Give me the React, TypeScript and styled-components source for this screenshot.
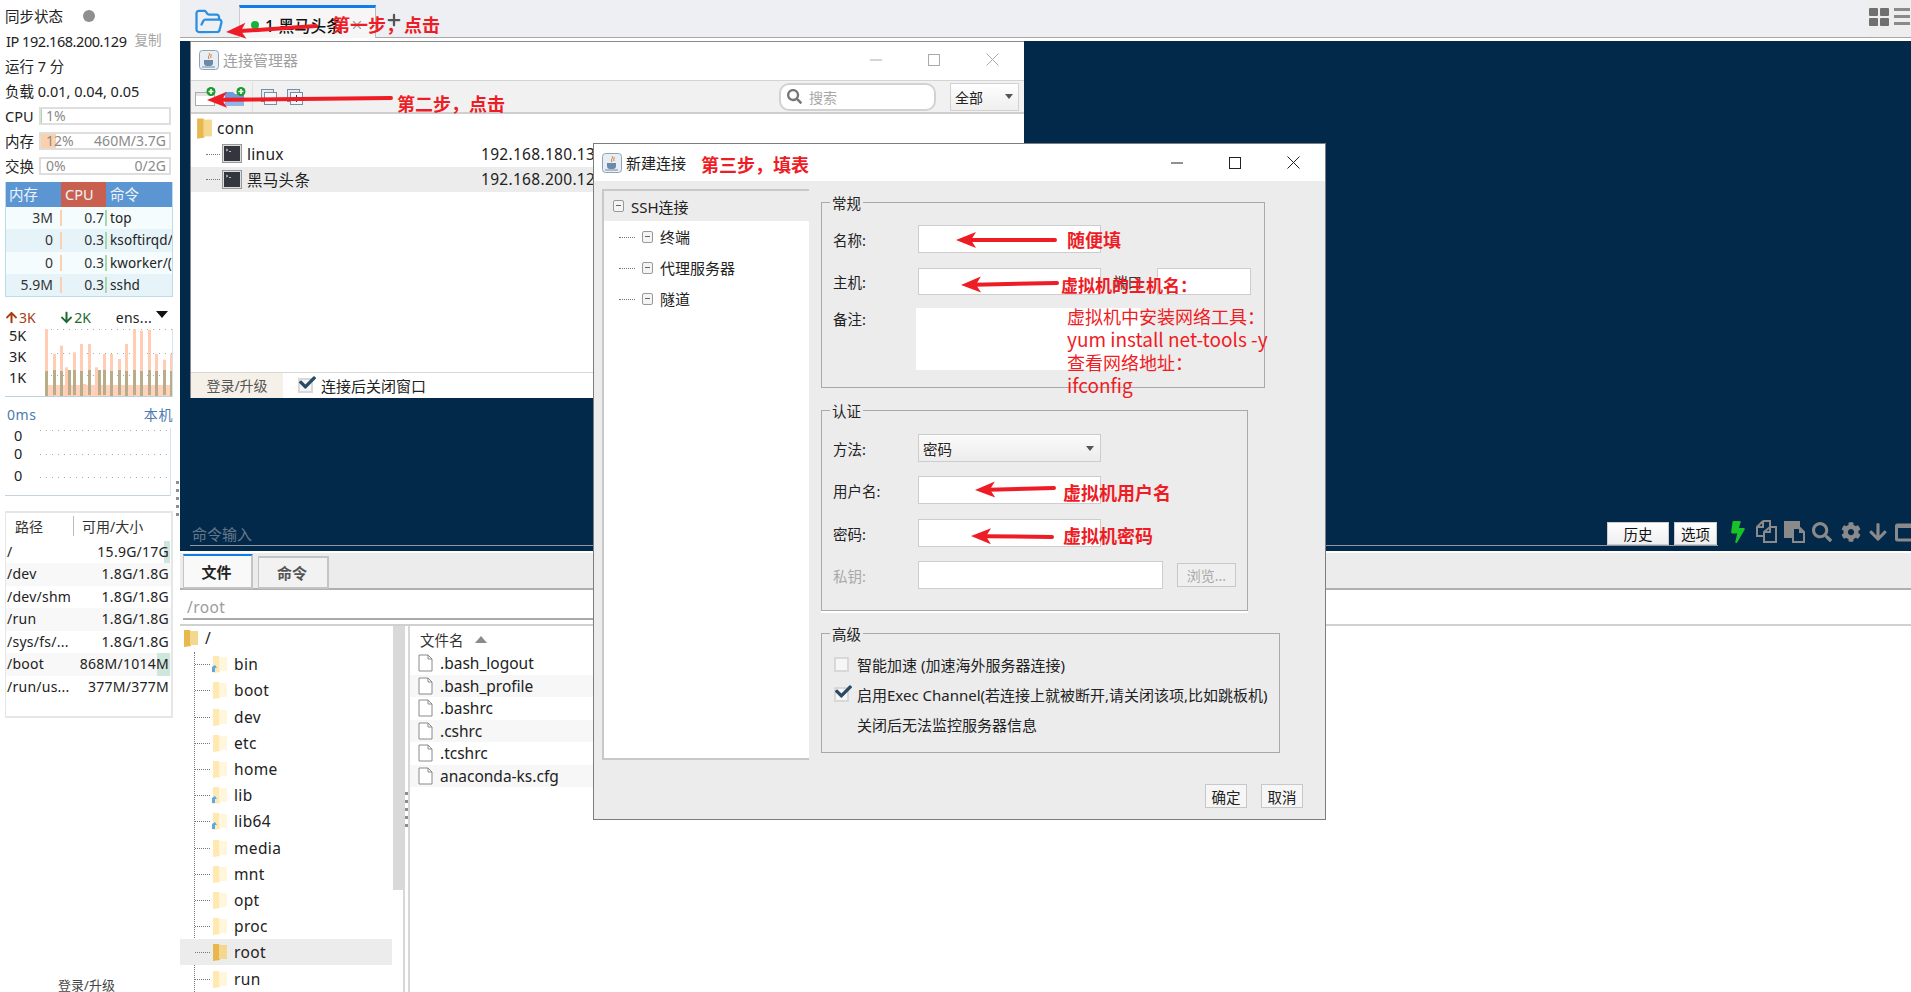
import React from "react";
import styled, { createGlobalStyle } from "styled-components";
import { FaCog, FaSearch, FaArrowDown, FaArrowUp, FaBolt, FaCheck } from "react-icons/fa";
import { FolderOpen, Plus, X } from "lucide-react";

const Global = createGlobalStyle`
  html, body { margin: 0; padding: 0; background: #fff; }
  * { box-sizing: border-box; }
  body { font-family: "Noto Sans", "Noto Sans CJK SC", sans-serif; font-size: 14.5px; color: #222; }
`;

const Page = styled.div`
  position: relative; width: 1911px; height: 992px; overflow: hidden; display: flex; background: #fff;
`;

/* ---------- sidebar ---------- */
const Sidebar = styled.aside`
  width: 180px; flex: none; height: 100%; display: flex; flex-direction: column; padding: 3.5px 7px 0 5px; position: relative; white-space: nowrap;
`;
const InfoRow = styled.div`
  height: 25px; display: flex; align-items: center; gap: 6px; line-height: 1;
`;
const IpText = styled.span`
  letter-spacing: -.45px; margin-left: 1px;
`;
const SyncDot = styled.span`
  width: 12px; height: 12px; border-radius: 50%; background: #8f8f8f; margin-left: 14px;
`;
const MutedLink = styled.span`
  color: #a5a5a5; font-size: 13.5px; margin-left: 2px;
`;
const BarLabel = styled.span`
  width: 28px; flex: none;
`;
const BarTrack = styled.div`
  position: relative; flex: none; width: 132px; height: 18px; border: 2px solid #dedede; background: #fff; display: flex; justify-content: space-between; align-items: center; padding: 0 3px 0 5px; color: #8a8a8a; font-size: 14px; overflow: hidden;
  span { position: relative; }
`;
const BarFill = styled.i<{ $color: string }>`
  position: absolute; left: 0; top: 0; bottom: 0; background: ${p => p.$color};
`;
const ProcTable = styled.div`
  margin-top: 3.5px; width: 168px; border: 1px solid #bcdcec; border-top: 0; font-size: 14px; overflow: hidden;
`;
const ProcGrid = styled.div<{ $bg: string }>`
  display: grid; grid-template-columns: 56px 45px 1fr; height: 22.3px; align-items: stretch; line-height: 22px; background: ${p => p.$bg};
`;
const ProcHead = styled.div<{ $hot?: boolean }>`
  height: 25px; line-height: 25px; color: #eef4fa; background: ${p => (p.$hot ? "#c9604f" : "#5b96d2")}; padding-left: 4px; font-size: 14.5px;
`;
const ProcHeadRow = styled.div`
  display: grid; grid-template-columns: 56px 45px 1fr; margin: 0 -1px;
`;
const NumCell = styled.div<{ $mark: string; $pad: number }>`
  text-align: right; padding-right: ${p => p.$pad}px; position: relative; color: #333;
  &::after { content: ""; position: absolute; right: 0; top: 3px; bottom: 3px; width: 2px; background: ${p => p.$mark}; }
`;
const CmdCell = styled.div`
  padding-left: 3px; overflow: hidden; font-size: 13.5px; letter-spacing: .1px;
`;
const MeterHead = styled.div<{ $top: number }>`
  margin-top: ${p => p.$top}px; height: 20px; display: flex; align-items: center; font-size: 14px; width: 168px;
`;
const NetValue = styled.span<{ $color: string }>`
  display: inline-flex; align-items: center; color: ${p => p.$color}; gap: 1px; width: 56px; font-size: 14px;
  svg { font-size: 13px; }
`;
const Iface = styled.span`
  margin-left: auto; letter-spacing: .3px; margin-right: 2px;
`;
const DownCaret = styled.i`
  width: 0; height: 0; border-left: 6px solid transparent; border-right: 6px solid transparent; border-top: 7px solid #111; margin: 0 5px 5px 2px;
`;
const ChartSvg = styled.svg<{ $mt: number }>`
  display: block; margin-top: ${p => p.$mt}px; flex: none;
`;
const PingLabel = styled.span`
  color: #4a7bb0; letter-spacing: .6px; padding-left: 2px;
  &:last-child { margin-left: auto; padding-left: 0; }
`;
const DiskTable = styled.div`
  margin-top: 14.5px; width: 168px; height: 207px; border: 2px solid #e6e6e6; border-left-width: 1px; flex: none; font-size: 14px;
`;
const DiskHead = styled.div`
  display: grid; grid-template-columns: 68px 1fr; height: 27px; align-items: center; margin-bottom: 1px; color: #333;
  span:first-child { padding-left: 9px; border-right: 1px solid #bbb; }
  span:last-child { padding-left: 8px; }
`;
const DiskRow = styled.div<{ $alt: boolean }>`
  position: relative; height: 22.5px; line-height: 22px; display: flex; justify-content: space-between; padding: 0 2px 0 1px; background: ${p => (p.$alt ? "#f8f8f8" : "#fff")}; letter-spacing: .25px;
  span { position: relative; }
`;
const DiskUsed = styled.i`
  position: absolute; right: 1px; top: 0; bottom: 0; background: #cfe6dc;
`;
const SideFooter = styled.div`
  margin-top: auto; height: 24px; text-align: center; font-size: 13px; color: #444; padding: 1px 5px 0 0; margin-bottom: -6px;
`;
const DragDots = styled.div<{ $x: number; $y: number }>`
  position: absolute; left: ${p => p.$x}px; top: ${p => p.$y}px; width: 3px; height: 38px;
  background: repeating-linear-gradient(to bottom, #8d8d8d 0 3px, transparent 3px 8px);
`;

/* ---------- main column ---------- */
const Main = styled.main`
  flex: 1; min-width: 0; display: flex; flex-direction: column; height: 100%;
`;
const TabBar = styled.div`
  height: 38px; flex: none; background: #edeff3; border-bottom: 1px solid #a8a8a8; display: flex; align-items: flex-end; padding-left: 14px; position: relative;
`;
const OpenFolder = styled.span`
  width: 45px; height: 34px; color: #2b8fe0; flex: none; display: flex; align-items: flex-start; svg { margin-top: 4px; }
`;
const TermTab = styled.div`
  width: 137px; height: 33px; margin-bottom: -1px; background: #f6f6f6; border-top: 3px solid #0f7ee8; border-left: 1px solid #ccc; border-right: 1px solid #bbb; display: flex; align-items: center; padding: 3px 0 0 11px; gap: 6px; font-size: 16px; font-weight: 500; white-space: nowrap; color: #111; flex: none;
`;
const LiveDot = styled.i`
  width: 8px; height: 8px; border-radius: 50%; background: #19b33c; flex: none;
`;
const TabClose = styled.span`
  color: #9a9a9a; margin-left: 2px; display: flex;
`;
const AddTab = styled.span`
  color: #555; margin: 0 0 8px 9px; display: flex;
`;
const ViewIcons = styled.div`
  margin-left: auto; height: 37px; width: 43px; background: #eeeeee; display: flex; align-items: center; gap: 5px; padding: 0 0 4px 1px;
`;
const GridIcon = styled.i`
  display: grid; grid-template-columns: 9px 9px; grid-auto-rows: 8px; gap: 2px; width: 20px; flex: none;
  b { background: #707070; border-radius: 1px; }
`;
const ListIcon = styled.i`
  width: 16px; height: 18px; flex: none;
  background: repeating-linear-gradient(to bottom, #8a8a8a 0 3px, #eeeeee 3px 7px);
`;
const WhiteGap = styled.div<{ $h: number }>`
  height: ${p => p.$h}px; flex: none; background: #fff;
`;
const Terminal = styled.div`
  height: 510px; flex: none; background: #03294a; display: flex; align-items: flex-end; padding: 0 0 5px 10px;
`;
const CmdInput = styled.div`
  width: 1528px; height: 25px; border-bottom: 1px solid #8d98a3; display: flex; align-items: flex-end; color: #64798a; font-size: 15px; line-height: 22px; padding-left: 2px; flex: none;
`;
const CmdButtons = styled.div`
  display: flex; gap: 5px; margin: 0 0 1px -111px; flex: none;
`;
const CmdButton = styled.button<{ $w: number }>`
  width: ${p => p.$w}px; height: 23px; border: 1px solid #ccc; background: linear-gradient(#fff, #efefef); font: inherit; font-size: 14.5px; color: #111; padding: 0; line-height: 20px;
`;
const CmdTools = styled.div`
  display: flex; align-items: center; gap: 7px; margin: 0 0 2px 10px; color: #8a8a8a; font-size: 20px; height: 25px; white-space: nowrap;
`;
const Bolt = styled.span`
  color: #18c02a; display: flex; font-size: 22px;
`;
const GearWrap = styled.span`
  display: flex; margin-left: 2px;
`;
const BottomTabs = styled.div`
  height: 37px; flex: none; background: #ececec; border-bottom: 2px solid #b0b0b0; display: flex; align-items: flex-end; padding-left: 3px; gap: 5px;
`;
const BottomTab = styled.div<{ $active?: boolean }>`
  width: ${p => (p.$active ? 70 : 71)}px; height: ${p => (p.$active ? 35 : 33)}px; margin-bottom: -1px; text-align: center; font-weight: 700; font-size: 15px; line-height: ${p => (p.$active ? 33 : 31)}px; padding-right: 2px;
  background: ${p => (p.$active ? "#f9f9f9" : "#f2f2f2")}; color: ${p => (p.$active ? "#222" : "#555")};
  border: 2px solid #c4c4c4; border-top: 2px solid ${p => (p.$active ? "#0f7ee8" : "#c4c4c4")}; border-left-width: 1px;
`;
const PathRow = styled.div`
  height: 30px; flex: none; width: 1140px; margin-left: 3px; border-bottom: 2px solid #a9a9a9; color: #9b9b9b; font-size: 15.5px; line-height: 35px; padding-left: 4px; letter-spacing: .4px;
`;
const Panes = styled.div`
  flex: 1; min-height: 0; display: flex; margin-top: 4px; overflow: hidden; border-top: 2px solid #d0d0d0;
`;
const TreePane = styled.div`
  width: 225px; flex: none; display: flex; border-right: 2px solid #d8d8d8; position: relative;
`;
const TreeCol = styled.div`
  width: 212px; flex: none; font-size: 15.5px; position: relative; letter-spacing: .35px; margin-top: -1px;
  &::before { content: ""; position: absolute; left: 14px; top: 27px; bottom: 0; border-left: 1px dotted #777; }
`;
const TreeRow = styled.div<{ $root?: boolean; $sel?: boolean }>`
  height: 26.2px; display: flex; align-items: center; gap: 5px; position: relative; padding-left: ${p => (p.$root ? 2 : 31)}px; background: ${p => (p.$sel ? "#ececec" : "transparent")};
  ${p => !p.$root && `&::before { content: ""; position: absolute; left: 15px; width: 15px; top: 50%; border-top: 1px dotted #777; }`}
`;
const Scrollbar = styled.div`
  width: 10px; height: 264px; background: #d9d9d9; flex: none; margin-left: 1px;
`;
const Splitter = styled.div`
  width: 3px; flex: none; position: relative;
`;
const FilePane = styled.div`
  flex: 1; min-width: 0; border-left: 2px solid #d8d8d8; font-size: 15.5px;
`;
const FileHead = styled.div`
  height: 26px; display: flex; align-items: center; padding-left: 10px; gap: 11px; font-size: 14.5px; color: #333;
`;
const SortUp = styled.i`
  width: 0; height: 0; border-left: 6px solid transparent; border-right: 6px solid transparent; border-bottom: 7px solid #8a8a8a;
`;
const FileRow = styled.div<{ $alt: boolean }>`
  height: 22.5px; width: 900px; display: flex; align-items: center; padding-left: 8px; gap: 7px; background: ${p => (p.$alt ? "#f7f7f7" : "#fff")};
`;

/* ---------- windows ---------- */
const ManagerWindow = styled.section`
  position: absolute; left: 190px; top: 41px; width: 834px; height: 357px; background: #fff; border-top: 1px solid #8a8a8a; border-left: 1px solid #8a8a8a; display: flex; flex-direction: column;
`;
const TitleBar = styled.div<{ $h: number; $muted?: boolean }>`
  height: ${p => p.$h}px; flex: none; background: #fff; display: flex; align-items: center; padding: 0 0 ${p => (p.$muted ? 3 : 0)}px 8px; gap: 4px; font-size: 15px; color: ${p => (p.$muted ? "#a0a0a0" : "#222")};
`;
const WinButtons = styled.div<{ $color: string; $right: number }>`
  margin-left: auto; display: flex; gap: 46px; margin-right: ${p => p.$right}px; color: ${p => p.$color}; align-items: center;
`;
const ManagerBar = styled.div`
  height: 34px; flex: none; background: #f1f1f1; border-top: 1px solid #d4d4d4; border-bottom: 2px solid #cfcfcf; display: flex; align-items: center; padding-left: 4px;
`;
const ToolGroup = styled.div<{ $sep?: boolean }>`
  display: flex; align-items: center; gap: ${p => (p.$sep ? 8 : 10)}px; padding-right: 5px; border-right: ${p => (p.$sep ? "1px solid #e0e0e0" : "0")}; height: 30px; margin-right: 8px;
`;
const SearchBox = styled.div`
  margin-left: auto; width: 157px; height: 28px; border: 2px solid #d2d2d2; border-radius: 10px; background: #fff; display: flex; align-items: center; padding-left: 6px; gap: 7px; color: #a8a8a8; font-size: 14px;
  svg { color: #777; font-size: 15px; }
`;
const AllSelect = styled.div`
  width: 69px; height: 28px; margin: 0 5px 0 14px; border: 1px solid #d2d2d2; background: linear-gradient(#fff, #eee); display: flex; align-items: center; justify-content: space-between; padding: 0 5px 0 4px; font-size: 14px;
`;
const SmallCaret = styled.i`
  width: 0; height: 0; border-left: 4px solid transparent; border-right: 4px solid transparent; border-top: 5px solid #555;
`;
const ConnTree = styled.div`
  flex: 1; padding-top: 1.5px; font-size: 15.5px; letter-spacing: .3px; position: relative;
  &::before { content: ""; position: absolute; left: 15px; top: 25px; height: 38px; border-left: 1px dotted #777; }
`;
const ConnRow = styled.div<{ $sel?: boolean; $root?: boolean }>`
  height: 25.5px; display: flex; align-items: center; position: relative; padding-left: ${p => (p.$root ? 4 : 31)}px; gap: ${p => (p.$root ? 3 : 5)}px; background: ${p => (p.$sel ? "#ececec" : "#fff")};
  ${p => !p.$root && `&::before { content: ""; position: absolute; left: 15px; width: 14px; top: 50%; border-top: 1px dotted #777; }`}
`;
const ConnName = styled.span`
  width: 229px; flex: none;
`;
const ManagerFooter = styled.div`
  height: 26px; flex: none; border-top: 1px solid #d8d8d8; display: flex; align-items: center; font-size: 15px; background: #fff;
`;
const UpgradeTag = styled.div`
  width: 92px; height: 100%; background: #f5f1e8; text-align: center; line-height: 25px; color: #555; font-size: 14px; margin-right: 15px;
`;
const FooterLabel = styled.span`
  margin-left: 8px;
`;
const Check = styled.span`
  width: 15px; height: 15px; flex: none; border: 2px solid #d8d8d8; background: #f6f6f6; position: relative; display: inline-block;
  svg { position: absolute; left: -1px; top: -6px; color: #2b4a66; font-size: 17px; }
`;

const Dialog = styled.section`
  position: absolute; left: 593px; top: 143px; width: 733px; height: 677px; background: #ececec; border: 1px solid #7d7d7d; display: flex; flex-direction: column;
`;
const DialogBody = styled.div`
  flex: 1; min-height: 0; display: flex;
`;
const NavTree = styled.nav`
  width: 207px; height: 571px; margin: 8px 0 0 8px; background: #fff; border: 2px solid #c8c8c8; border-right: 0; flex: none; font-size: 15px; position: relative;
  &::before { content: ""; position: absolute; left: 15px; top: 30px; height: 79px; border-left: 1px dotted #777; }
`;
const NavRow = styled.div<{ $sel?: boolean }>`
  height: ${p => (p.$sel ? 30 : 31)}px; display: flex; align-items: center; position: relative; gap: 7px; padding-left: ${p => (p.$sel ? 9 : 38)}px; background: ${p => (p.$sel ? "#ececec" : "#fff")};
  ${p => !p.$sel && `&::before { content: ""; position: absolute; left: 15px; width: 16px; top: 50%; border-top: 1px dotted #777; }`}
`;
const MinusBox = styled.i`
  width: 11px; height: 12px; flex: none; border: 1px solid #999; border-radius: 2px; background: #f4f4f4; position: relative;
  &::after { content: ""; position: absolute; left: 2px; right: 2px; top: 4px; height: 1px; background: #666; }
`;
const FormCol = styled.div`
  flex: 1; padding: 21px 0 0 12px; min-width: 0;
`;
const Group = styled.fieldset<{ $w: number; $h: number; $top: number; $pad: number; $halo?: boolean }>`
  margin: ${p => p.$top}px 0 0; width: ${p => p.$w}px; height: ${p => p.$h}px; border: 1px solid #a9a9a9; padding: ${p => p.$pad}px 0 0 10px; position: relative; min-inline-size: 0; font-size: 14.5px;
  ${p => (p.$halo ? "box-shadow: 0 2px 0 #fff;" : "")}
`;
const GroupTitle = styled.span`
  position: absolute; left: 8px; top: -10px; padding: 0 2px; background: #ececec; font-size: 14.5px; color: #222; line-height: 20px;
`;
const FieldRow = styled.div<{ $gap: number; $muted?: boolean; $top?: boolean }>`
  display: flex; align-items: ${p => (p.$top ? "flex-start" : "center")}; margin-bottom: ${p => p.$gap}px; color: ${p => (p.$muted ? "#a9a9a9" : "#222")};
`;
const FieldLabel = styled.label`
  width: 85px; flex: none; margin-left: 1px;
`;
const Field = styled.div<{ $w: number; $h: number }>`
  width: ${p => p.$w}px; height: ${p => p.$h}px; background: #fff; border: 1px solid #cdcdcd; flex: none;
`;
const NotesField = styled.div`
  width: 225px; height: 62px; background: #fff; margin-left: -2px; flex: none;
`;
const PortLabel = styled.label`
  width: 44px; margin-left: 12px; flex: none; color: #333;
`;
const ComboField = styled.div`
  width: 183px; height: 28px; background: linear-gradient(#fbfbfb, #ececec); border: 1px solid #cdcdcd; display: flex; align-items: center; justify-content: space-between; padding: 0 6px 0 4px; flex: none;
`;
const BrowseBtn = styled.button`
  width: 59px; height: 24px; margin-left: 14px; border: 1px solid #c8c8c8; background: #efefef; color: #a9a9a9; font: inherit; font-size: 14px; padding: 0;
`;
const CheckRow = styled.div`
  height: 30px; display: flex; align-items: center; gap: 8px; padding-left: 2px; white-space: nowrap; font-size: 15px;
`;
const CheckSpacer = styled.i`
  width: 15px; flex: none;
`;
const FormButtons = styled.div`
  display: flex; justify-content: flex-end; gap: 14px; margin: 31px 22px 0 0;
`;
const FormButton = styled.button`
  width: 42px; height: 24px; border: 1px solid #c8c8c8; background: #f6f6f6; font: inherit; font-size: 14.5px; padding: 0; color: #222;
`;

/* ---------- annotations ---------- */
const ArrowLayer = styled.svg`
  position: absolute; left: 0; top: 0; pointer-events: none;
`;
const Note = styled.div<{ $x: number; $y: number; $size?: number; $thin?: boolean }>`
  position: absolute; left: ${p => p.$x}px; top: ${p => p.$y}px; transform: translateY(-50%); color: ${p => (p.$thin ? "#f01c24" : "#ee1c25")}; font-weight: ${p => (p.$thin ? 400 : 700)}; font-size: ${p => p.$size ?? 18}px; line-height: 24px; white-space: nowrap; font-family: "Noto Sans CJK SC", sans-serif;
`;

/* ---------- drawings ---------- */
const WinGlyphs = () => (
  <>
    <svg width="12" height="12" viewBox="0 0 12 12"><path d="M0 6h12" stroke="currentColor" /></svg>
    <svg width="12" height="12" viewBox="0 0 12 12"><rect x=".5" y=".5" width="11" height="11" fill="none" stroke="currentColor" /></svg>
    <svg width="13" height="13" viewBox="0 0 13 13"><path d="M.5.5l12 12M12.5.5l-12 12" stroke="currentColor" /></svg>
  </>
);
const FolderIcon = ({ pale, link, big }: { pale?: boolean; link?: boolean; big?: boolean }) => (
  <svg width={big ? 19 : 18} height={big ? 24 : 20} viewBox="0 0 18 20" preserveAspectRatio="none" style={{ flex: "none" }}>
    <path d="M2 2h6l1 2v14l-7 1z" fill={pale ? "#ffe9b0" : "#e8b84e"} />
    <path d="M8 3h8v14H8z" fill={pale ? "#fff6dc" : "#f5d88f"} />
    {link && <path d="M1 18v-5l3-2 2 3h-2v4z" fill="#5aa9e6" />}
  </svg>
);
const TermIcon = () => (
  <svg width="20" height="19" viewBox="0 0 20 19" style={{ flex: "none" }}>
    <rect x=".5" y=".5" width="19" height="18" fill="#ddd" stroke="#999" />
    <rect x="2" y="2" width="16" height="15" fill="#33363c" />
    <path d="M4 5l2 1-2 1M7 7.5h2" stroke="#bbb" fill="none" />
  </svg>
);
const JavaIcon = () => (
  <svg width="20" height="20" viewBox="0 0 20 20" style={{ flex: "none" }}>
    <rect x=".5" y=".5" width="19" height="19" rx="3" fill="#e8eef4" stroke="#8da3b8" />
    <path d="M10 3c2 2-2 3 0 6M12 4c1 1-1 2 0 4" stroke="#d8742c" fill="none" />
    <path d="M5 10h9v3a3 3 0 0 1-3 3H8a3 3 0 0 1-3-3z" fill="#6c8aa8" />
    <path d="M3 17h13" stroke="#6c8aa8" />
  </svg>
);
const FileIcon = () => (
  <svg width="15" height="18" viewBox="0 0 15 18" style={{ flex: "none" }}>
    <path d="M1 1h9l4 4v12H1z" fill="#fff" stroke="#8a8a8a" />
    <path d="M10 1v4h4" fill="none" stroke="#8a8a8a" />
  </svg>
);
const NewConnIcon = () => (
  <svg width="22" height="20" viewBox="0 0 22 20">
    <rect x=".5" y="5.5" width="19" height="13" fill="#fff" stroke="#aaa" />
    <rect x="1" y="6" width="18" height="3" fill="#e4e4e4" />
    <circle cx="16" cy="4.5" r="4.5" fill="#1a9c2b" />
    <path d="M16 2v5M13.5 4.5h5" stroke="#fff" strokeWidth="1.6" />
  </svg>
);
const NewGroupIcon = () => (
  <svg width="22" height="20" viewBox="0 0 22 20">
    <path d="M0 5h8l2 2h9v12H0z" fill="#6f9bd8" />
    <rect y="11" width="19" height="8" fill="#8fb4e6" />
    <circle cx="16" cy="4.5" r="4.5" fill="#1a9c2b" />
    <path d="M16 2v5M13.5 4.5h5" stroke="#fff" strokeWidth="1.6" />
  </svg>
);
const WinCopyIcon = ({ split }: { split?: boolean }) => (
  <svg width="16" height="16" viewBox="0 0 16 16">
    <rect x=".5" y=".5" width="12" height="12" fill="#e4ebf3" stroke="#7a8ea3" />
    <rect x="3.5" y="3.5" width="12" height="12" fill="#f4f7fa" stroke="#7a8ea3" />
    {split && <path d="M9.5 6v7" stroke="#333" />}
  </svg>
);
const CopyDoc = () => (
  <svg width="21" height="23" viewBox="0 0 21 23" fill="none" stroke="#8a8a8a" strokeWidth="2" style={{ flex: "none" }}>
    <path d="M7 1h7v6M7 1L1 7v9h7M7 1v6H1" />
    <path d="M14 7h6v15H8V12zM14 7v5H8" />
  </svg>
);
const PasteDoc = () => (
  <svg width="21" height="23" viewBox="0 0 21 23" fill="none" stroke="#8a8a8a" strokeWidth="2" style={{ flex: "none" }}>
    <path d="M1 2h14v5H9v10H1z" fill="#8a8a8a" />
    <path d="M9 8h7l4 4v10H9z" />
    <path d="M16 8v4h4" />
  </svg>
);
const PanelIcon = () => (
  <svg width="20" height="20" viewBox="0 0 20 20" style={{ flex: "none" }}>
    <rect x="1.5" y="3" width="24" height="15" rx="1" fill="none" stroke="#8a8a8a" strokeWidth="3" />
    <rect x="2" y="3" width="24" height="3" fill="#8a8a8a" />
  </svg>
);

const tall = [[45, 115], [53, 190], [60, 165], [65, 230], [68, 240], [73, 185], [80, 160], [83, 280], [88, 160], [95, 230], [98, 240], [103, 190], [110, 190], [118, 205], [125, 160], [133, 115], [140, 120], [148, 118], [155, 190], [163, 207], [170, 190]];
const brown = [45, 53, 60, 68, 73, 80, 88, 98, 103, 110, 118, 125, 133, 140, 148, 155, 163, 170];

const NetChart = () => (
  <ChartSvg $mt={2} width="168" height="68" viewBox="0 0 168 68">
    {[0, 24, 46].map(y => <line key={y} x1="40" x2="167" y1={y + .5} y2={y + .5} stroke="#aaa" strokeDasharray="1 5" />)}
    <rect x="40" y="56" width="127" height="11" fill="#ffd2bd" />
    {tall.map(([x, z]) => <rect key={x} x={x - 5} y={(z - 115) / 3} width="3" height={67 - (z - 115) / 3} fill="#ffcdb4" />)}
    {brown.map(x => <rect key={x} x={x - 5} y={41 + (x % 5 === 3 ? 0 : 1)} width="3" height="25" fill="#b9ac88" />)}
    <line x1="0" x2="168" y1="67.5" y2="67.5" stroke="#bcd3de" />
    <line x1="167.5" x2="167.5" y1="0" y2="68" stroke="#d5e4ea" />
    {[["5K", 12], ["3K", 33], ["1K", 54]].map(([t, y]) => (
      <text key={String(t)} x="4" y={Number(y)} fontSize="14.5" fill="#222" fontFamily="Noto Sans">{t}</text>
    ))}
  </ChartSvg>
);
const PingChart = () => (
  <ChartSvg $mt={4} width="168" height="68" viewBox="0 0 168 68">
    {[2, 26, 49].map(y => <line key={y} x1="35" x2="162" y1={y + .5} y2={y + .5} stroke="#aaa" strokeDasharray="1 5" />)}
    <line x1="0" x2="165" y1="67.5" y2="67.5" stroke="#c4d4da" />
    <line x1="165.5" x2="165.5" y1="0" y2="68" stroke="#d5e4ea" />
    {[13, 31, 53].map(y => <text key={y} x="9" y={y} fontSize="14.5" fill="#222" fontFamily="Noto Sans">0</text>)}
  </ChartSvg>
);

const Arrow = ({ x1, y1, x2, y2, w = 4 }: { x1: number; y1: number; x2: number; y2: number; w?: number }) => {
  const a = Math.atan2(y1 - y2, x1 - x2);
  const p = (d: number, o: number) => `${x2 + Math.cos(a) * d - Math.sin(a) * o},${y2 + Math.sin(a) * d + Math.cos(a) * o}`;
  return (
    <g>
      <line x1={x1} y1={y1} x2={x2 + Math.cos(a) * 14} y2={y2 + Math.sin(a) * 14} stroke="#ee1c25" strokeWidth={w} strokeLinecap="round" />
      <polygon points={`${p(0, 0)} ${p(20, -8)} ${p(15, 0)} ${p(20, 8)}`} fill="#ee1c25" />
    </g>
  );
};

const procs = [["3M", "0.7", "top"], ["0", "0.3", "ksoftirqd/"], ["0", "0.3", "kworker/("], ["5.9M", "0.3", "sshd"]];
const disks: [string, string, number][] = [["/", "15.9G/17G", 6], ["/dev", "1.8G/1.8G", 0], ["/dev/shm", "1.8G/1.8G", 0], ["/run", "1.8G/1.8G", 0], ["/sys/fs/...", "1.8G/1.8G", 0], ["/boot", "868M/1014M", 13], ["/run/us...", "377M/377M", 0]];
const dirs: [string, boolean][] = [["bin", true], ["boot", false], ["dev", false], ["etc", false], ["home", false], ["lib", true], ["lib64", true], ["media", false], ["mnt", false], ["opt", false], ["proc", false], ["root", false], ["run", false]];
const files = [".bash_logout", ".bash_profile", ".bashrc", ".cshrc", ".tcshrc", "anaconda-ks.cfg"];

export default function App() {
  return (
    <Page>
      <Global />
      <Sidebar>
        <InfoRow>同步状态<SyncDot /></InfoRow>
        <InfoRow><IpText>IP 192.168.200.129</IpText><MutedLink>复制</MutedLink></InfoRow>
        <InfoRow>运行 7 分</InfoRow>
        <InfoRow>负载 0.01, 0.04, 0.05</InfoRow>
        <InfoRow>
          <BarLabel>CPU</BarLabel>
          <BarTrack><BarFill $color="#a7d8a7" style={{ width: "1%" }} /><span>1%</span></BarTrack>
        </InfoRow>
        <InfoRow>
          <BarLabel>内存</BarLabel>
          <BarTrack><BarFill $color="#fbd0ac" style={{ width: "12%" }} /><span>12%</span><span>460M/3.7G</span></BarTrack>
        </InfoRow>
        <InfoRow>
          <BarLabel>交换</BarLabel>
          <BarTrack><span>0%</span><span>0/2G</span></BarTrack>
        </InfoRow>
        <ProcTable>
          <ProcHeadRow>
            <ProcHead>内存</ProcHead>
            <ProcHead $hot>CPU</ProcHead>
            <ProcHead>命令</ProcHead>
          </ProcHeadRow>
          {procs.map((r, i) => (
            <ProcGrid key={i} $bg={i % 2 ? "#e6f4f9" : "#f5fcfd"}>
              <NumCell $mark="#fbd0ac" $pad={9}>{r[0]}</NumCell>
              <NumCell $mark="#a7d8a7" $pad={3}>{r[1]}</NumCell>
              <CmdCell>{r[2]}</CmdCell>
            </ProcGrid>
          ))}
        </ProcTable>
        <MeterHead $top={10}>
          <NetValue $color="#a83c10"><FaArrowUp />3K</NetValue>
          <NetValue $color="#1d6b2e"><FaArrowDown />2K</NetValue>
          <Iface>ens...</Iface>
          <DownCaret />
        </MeterHead>
        <NetChart />
        <MeterHead $top={7}>
          <PingLabel>0ms</PingLabel>
          <PingLabel>本机</PingLabel>
        </MeterHead>
        <PingChart />
        <DiskTable>
          <DiskHead><span>路径</span><span>可用/大小</span></DiskHead>
          {disks.map((d, i) => (
            <DiskRow key={d[0]} $alt={i % 2 === 1}>
              {d[2] > 0 && <DiskUsed style={{ width: d[2] }} />}
              <span>{d[0]}</span><span>{d[1]}</span>
            </DiskRow>
          ))}
        </DiskTable>
        <SideFooter>登录/升级</SideFooter>
        <DragDots $x={176} $y={481} />
      </Sidebar>

      <Main>
        <TabBar>
          <OpenFolder><FolderOpen size={30} strokeWidth={1.8} /></OpenFolder>
          <TermTab><LiveDot />1 黑马头条<TabClose><X size={14} /></TabClose></TermTab>
          <AddTab><Plus size={18} strokeWidth={3} /></AddTab>
          <ViewIcons>
            <GridIcon><b /><b /><b /><b /></GridIcon>
            <ListIcon />
          </ViewIcons>
        </TabBar>
        <WhiteGap $h={3} />
        <Terminal>
          <CmdInput>命令输入</CmdInput>
          <CmdButtons>
            <CmdButton $w={62}>历史</CmdButton>
            <CmdButton $w={43}>选项</CmdButton>
          </CmdButtons>
          <CmdTools>
            <Bolt><FaBolt /></Bolt>
            <CopyDoc />
            <PasteDoc />
            <FaSearch />
            <GearWrap><FaCog /></GearWrap>
            <FaArrowDown />
            <PanelIcon />
          </CmdTools>
        </Terminal>
        <WhiteGap $h={2} />
        <BottomTabs>
          <BottomTab $active>文件</BottomTab>
          <BottomTab>命令</BottomTab>
        </BottomTabs>
        <PathRow>/root</PathRow>
        <Panes>
          <TreePane>
            <TreeCol>
              <TreeRow $root><FolderIcon />/</TreeRow>
              {dirs.map(([d, link]) => (
                <TreeRow key={d} $sel={d === "root"}>
                  <FolderIcon pale={d !== "root"} link={link} />{d}
                </TreeRow>
              ))}
            </TreeCol>
            <Scrollbar />
          </TreePane>
          <Splitter><DragDots $x={0} $y={166} /></Splitter>
          <FilePane>
            <FileHead>文件名<SortUp /></FileHead>
            {files.map((f, i) => (
              <FileRow key={f} $alt={i % 2 === 1}><FileIcon />{f}</FileRow>
            ))}
          </FilePane>
        </Panes>
      </Main>

      <ManagerWindow>
        <TitleBar $h={38} $muted>
          <JavaIcon />连接管理器
          <WinButtons $color="#aaa" $right={25}>
            <WinGlyphs />
          </WinButtons>
        </TitleBar>
        <ManagerBar>
          <ToolGroup $sep><NewConnIcon /><NewGroupIcon /></ToolGroup>
          <ToolGroup><WinCopyIcon /><WinCopyIcon split /></ToolGroup>
          <SearchBox><FaSearch />搜索</SearchBox>
          <AllSelect>全部<SmallCaret /></AllSelect>
        </ManagerBar>
        <ConnTree>
          <ConnRow $root><FolderIcon big />conn</ConnRow>
          <ConnRow><TermIcon /><ConnName>linux</ConnName>192.168.180.13</ConnRow>
          <ConnRow $sel><TermIcon /><ConnName>黑马头条</ConnName>192.168.200.12</ConnRow>
        </ConnTree>
        <ManagerFooter>
          <UpgradeTag>登录/升级</UpgradeTag>
          <Check><FaCheck /></Check>
          <FooterLabel>连接后关闭窗口</FooterLabel>
        </ManagerFooter>
      </ManagerWindow>

      <Dialog>
        <TitleBar $h={37}>
          <JavaIcon />新建连接
          <WinButtons $color="#222" $right={25}>
            <WinGlyphs />
          </WinButtons>
        </TitleBar>
        <DialogBody>
          <NavTree>
            <NavRow $sel><MinusBox />SSH连接</NavRow>
            <NavRow><MinusBox />终端</NavRow>
            <NavRow><MinusBox />代理服务器</NavRow>
            <NavRow><MinusBox />隧道</NavRow>
          </NavTree>
          <FormCol>
            <Group $w={444} $h={186} $top={0} $pad={22}>
              <GroupTitle>常规</GroupTitle>
              <FieldRow $gap={15}><FieldLabel>名称:</FieldLabel><Field $w={183} $h={28} /></FieldRow>
              <FieldRow $gap={13}>
                <FieldLabel>主机:</FieldLabel><Field $w={183} $h={27} />
                <PortLabel>端口</PortLabel><Field $w={94} $h={27} />
              </FieldRow>
              <FieldRow $gap={0} $top>
                <FieldLabel>备注:</FieldLabel><NotesField />
              </FieldRow>
            </Group>
            <Group $w={427} $h={201} $top={22} $pad={23} $halo>
              <GroupTitle>认证</GroupTitle>
              <FieldRow $gap={14}><FieldLabel>方法:</FieldLabel><ComboField>密码<SmallCaret /></ComboField></FieldRow>
              <FieldRow $gap={15}><FieldLabel>用户名:</FieldLabel><Field $w={183} $h={28} /></FieldRow>
              <FieldRow $gap={14}><FieldLabel>密码:</FieldLabel><Field $w={183} $h={28} /></FieldRow>
              <FieldRow $gap={0} $muted><FieldLabel>私钥:</FieldLabel><Field $w={245} $h={28} /><BrowseBtn>浏览...</BrowseBtn></FieldRow>
            </Group>
            <Group $w={459} $h={120} $top={22} $pad={15}>
              <GroupTitle>高级</GroupTitle>
              <CheckRow><Check />智能加速 (加速海外服务器连接)</CheckRow>
              <CheckRow><Check><FaCheck /></Check>启用Exec Channel(若连接上就被断开,请关闭该项,比如跳板机)</CheckRow>
              <CheckRow><CheckSpacer />关闭后无法监控服务器信息</CheckRow>
            </Group>
            <FormButtons>
              <FormButton>确定</FormButton>
              <FormButton>取消</FormButton>
            </FormButtons>
          </FormCol>
        </DialogBody>
      </Dialog>

      <ArrowLayer width="1911" height="992" viewBox="0 0 1911 992">
        <Arrow x1={316} y1={26} x2={226} y2={32} />
        <Arrow x1={391} y1={98} x2={207} y2={100} />
        <Arrow x1={1055} y1={240} x2={956} y2={240} />
        <Arrow x1={1057} y1={283} x2={961} y2={285} />
        <Arrow x1={1054} y1={488} x2={975} y2={490} />
        <Arrow x1={1052} y1={537} x2={971} y2={536} />
      </ArrowLayer>
      <Note $x={332} $y={24}>第一步，点击</Note>
      <Note $x={397} $y={103}>第二步，点击</Note>
      <Note $x={701} $y={164}>第三步，填表</Note>
      <Note $x={1067} $y={239}>随便填</Note>
      <Note $x={1061} $y={285} $size={17}>虚拟机的主机名：</Note>
      <Note $x={1067} $y={316} $size={18} $thin>虚拟机中安装网络工具：</Note>
      <Note $x={1067} $y={339} $size={19} $thin>yum install net-tools -y</Note>
      <Note $x={1067} $y={362} $size={18} $thin>查看网络地址：</Note>
      <Note $x={1067} $y={385} $size={19} $thin>ifconfig</Note>
      <Note $x={1063} $y={492}>虚拟机用户名</Note>
      <Note $x={1063} $y={535}>虚拟机密码</Note>
    </Page>
  );
}
